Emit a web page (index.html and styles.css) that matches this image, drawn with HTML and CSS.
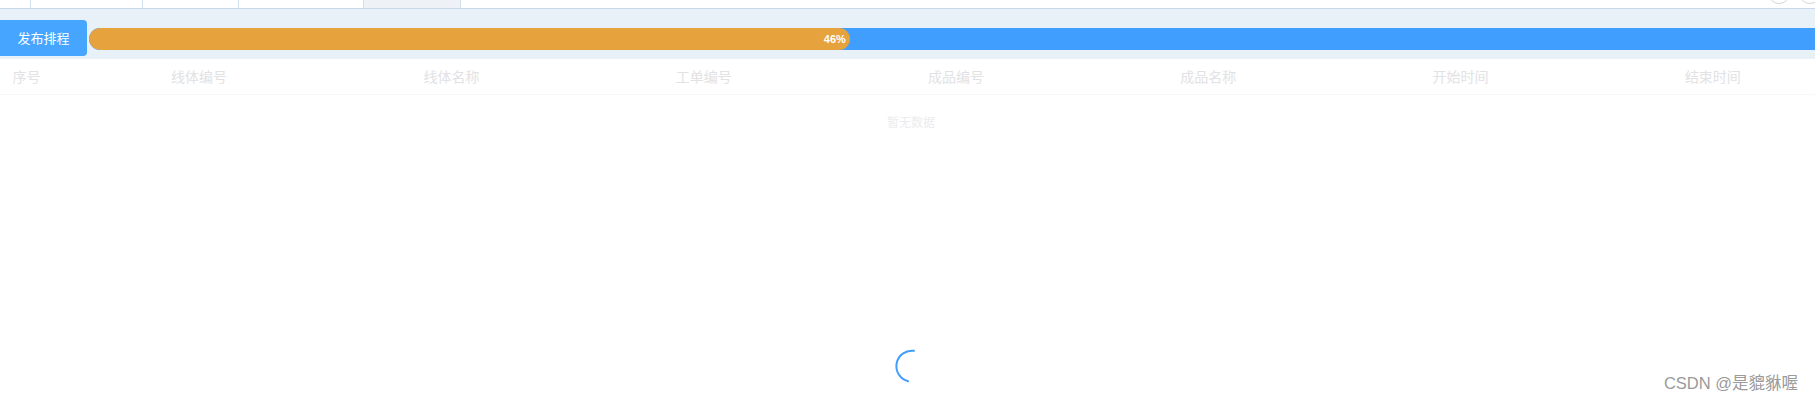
FILE: index.html
```html
<!DOCTYPE html>
<html lang="zh-CN">
<head>
<meta charset="utf-8">
<title>发布排程</title>
<link rel="stylesheet" href="styles.css">
</head>
<body>
<div class="page">
  <div class="tabs">
    <div class="tab tab-a"></div>
    <div class="tab tab-b"></div>
    <div class="tab tab-c"></div>
    <div class="tab tab-d"></div>
    <div class="tab tab-e active"></div>
    <div class="tab-tools">
      <span class="circle"></span>
      <span class="circle"></span>
    </div>
  </div>

  <div class="toolbar">
    <button class="publish">发布排程</button>
    <div class="progress">
      <div class="fill" style="width:43.8%"><span class="pct">46%</span></div>
    </div>
  </div>

  <div class="table">
    <div class="thead">
      <div class="th">序号</div>
      <div class="th">线体编号</div>
      <div class="th">线体名称</div>
      <div class="th">工单编号</div>
      <div class="th">成品编号</div>
      <div class="th">成品名称</div>
      <div class="th">开始时间</div>
      <div class="th">结束时间</div>
    </div>
    <div class="empty">暂无数据</div>
    <div class="loading">
      <svg class="spinner" width="40" height="40" viewBox="0 0 40 40">
        <path d="M22.9 4.8 A15.5 15.5 0 0 0 17.1 35.2" fill="none" stroke="#409eff" stroke-width="2" stroke-linecap="round"/>
      </svg>
    </div>
  </div>

  <div class="watermark">CSDN @是貔貅喔</div>
</div>
</body>
</html>
```

FILE: styles.css
```css
html, body {
  margin: 0;
  padding: 0;
  background: #ffffff;
}

body {
  font-family: "Noto Sans CJK SC", "Liberation Sans", sans-serif;
  width: 1815px;
  height: 402px;
  overflow: hidden;
}

.page {
  position: relative;
  width: 1815px;
  height: 402px;
  overflow: hidden;
}

/* top tab strip (clipped) */
.tabs {
  display: flex;
  align-items: flex-end;
  height: 8px;
  border-bottom: 1px solid #c9d9eb;
  background: #ffffff;
  overflow: hidden;
}

.tab {
  height: 8px;
  box-sizing: border-box;
  border-right: 1px solid #d3e0ee;
  background: #ffffff;
}

.tab-a { width: 31px; }
.tab-b { width: 112px; }
.tab-c { width: 96px; }
.tab-d { width: 125px; }
.tab-e { width: 97px; }

.tab.active {
  background: #eef2f7;
}

.tab-tools {
  margin-left: auto;
  margin-right: -6px;
  display: flex;
  gap: 9px;
  align-items: flex-end;
  margin-bottom: 4px;
  flex-shrink: 0;
}

.circle {
  display: block;
  width: 22px;
  height: 22px;
  box-sizing: border-box;
  border: 1px solid #d6d6d6;
  border-radius: 50%;
  background: #ffffff;
  flex-shrink: 0;
}

/* toolbar with button + progress */
.toolbar {
  display: flex;
  align-items: center;
  gap: 2px;
  background: #e8f0f8;
  padding: 11px 0 3px 0;
  overflow: hidden;
}

.publish {
  flex: 0 0 87px;
  height: 36px;
  margin: 0;
  padding: 0;
  border: none;
  border-radius: 0 4px 4px 0;
  background: #46a6ff;
  color: #ffffff;
  font-family: "Noto Sans CJK SC", "Liberation Sans", sans-serif;
  font-size: 13px;
  line-height: 36px;
  text-align: center;
}

.progress {
  flex: 0 0 1737px;
  height: 22px;
  margin-top: 2px;
  border-radius: 11px;
  background: #409eff;
  overflow: hidden;
}

.fill {
  height: 22px;
  border-radius: 11px;
  background: #e6a23c;
  display: flex;
  align-items: center;
  justify-content: flex-end;
}

.pct {
  margin: 0 4px 0 0;
  color: #ffffff;
  font-family: "Liberation Sans", sans-serif;
  font-size: 11px;
  font-weight: bold;
  line-height: 22px;
}

/* table (faded under loading mask) */
.table {
  background: #ffffff;
}

.thead {
  display: grid;
  grid-template-columns: 158.6px repeat(7, 252.3px);
  height: 35px;
  border-bottom: 1px solid #f7f7f8;
  overflow: hidden;
}

.th {
  padding-left: 12.5px;
  font-size: 14px;
  line-height: 35px;
  color: #e2e2e4;
  white-space: nowrap;
}

.empty {
  height: 53px;
  line-height: 53px;
  text-align: center;
  padding-left: 7px;
  font-size: 12px;
  color: #ececee;
}

.loading {
  display: flex;
  justify-content: center;
  padding-top: 198px;
  padding-left: 6px;
}

.spinner {
  display: block;
}

.watermark {
  position: absolute;
  right: 17px;
  top: 372px;
  font-family: "Liberation Sans", "Noto Sans CJK SC", sans-serif;
  font-size: 16.5px;
  line-height: 22px;
  color: #9a9a9a;
  text-shadow: 0 0 1px #ffffff;
  white-space: nowrap;
}
```
